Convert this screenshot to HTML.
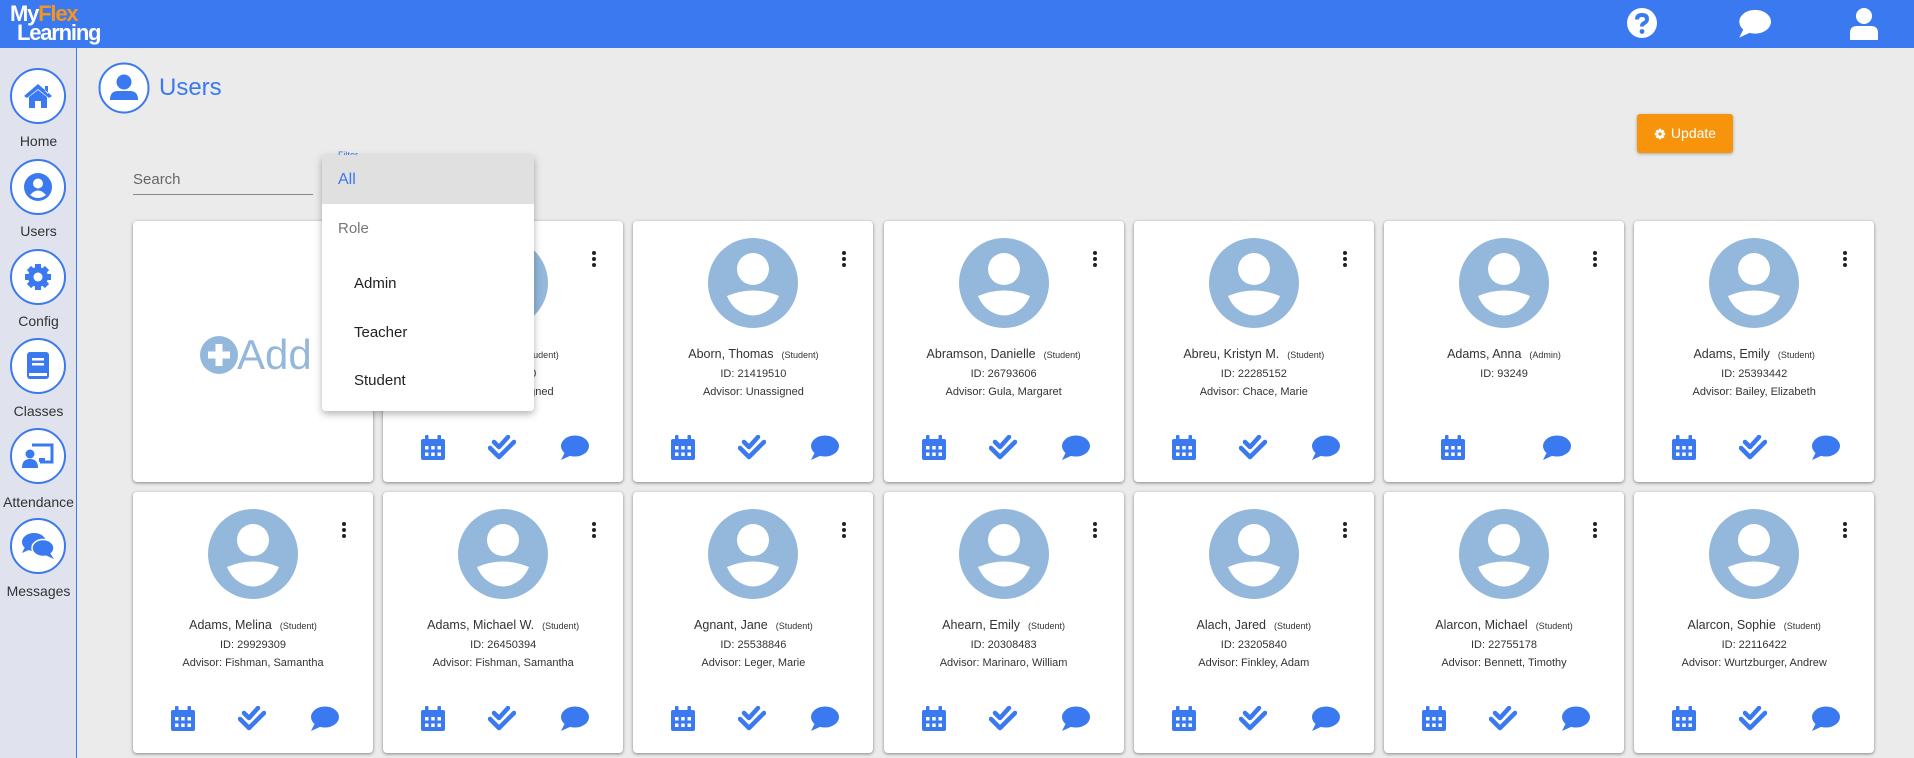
<!DOCTYPE html>
<html><head><meta charset="utf-8"><style>
*{box-sizing:border-box;margin:0;padding:0}
body{width:1914px;height:758px;overflow:hidden;background:#ebebeb;font-family:"Liberation Sans",sans-serif;position:relative;color:#333}
.hdr{position:absolute;left:0;top:0;width:1914px;height:48px;background:#3a79f0}
.side{position:absolute;left:0;top:48px;width:77px;height:710px;background:#e0e2ee;border-right:1.5px solid #3a79f0}
.nav{position:absolute;left:10px;width:56px;height:56px;border-radius:50%;background:#fff;border:2.5px solid #3a79f0;display:flex;align-items:center;justify-content:center}
.nl{position:absolute;left:0;width:77px;text-align:center;font-size:14px;color:#333}
.card{position:absolute;width:240px;height:261px;background:#fff;border-radius:4px;box-shadow:0 1px 3px rgba(0,0,0,.45)}
.av{position:absolute;left:75px;top:17px}
.dots{position:absolute;left:209px;top:30px;width:4px}
.dots i{display:block;width:4px;height:4px;border-radius:50%;background:#222;margin-bottom:2px}
.nm{position:absolute;left:0;width:240px;top:126px;text-align:center;font-size:12.5px;color:#333}
.nm small{font-size:9px;margin-left:8px}
.ln{position:absolute;left:0;width:240px;text-align:center;font-size:11px;color:#333}
.ic{position:absolute;top:214px}
</style></head><body>
<svg width="0" height="0" style="position:absolute">
<defs>
<symbol id="av" viewBox="-45 -45 90 90"><circle r="45" fill="#94b8db"/><circle cy="-14" r="16" fill="#fff"/><path d="M-26 13 Q0 2 26 13 A36 36 0 0 1 18 25 Q0 40 -18 25 A36 36 0 0 1 -26 13Z" fill="#fff"/></symbol>
<symbol id="cal" viewBox="0 0 26 26"><rect x="1" y="4" width="24" height="21" rx="2" fill="#3a79f0"/><rect x="5" y="0" width="3.5" height="6" rx="1" fill="#3a79f0"/><rect x="17.5" y="0" width="3.5" height="6" rx="1" fill="#3a79f0"/><g fill="#fff"><rect x="5" y="11" width="3.5" height="3.5"/><rect x="11.2" y="11" width="3.5" height="3.5"/><rect x="17.5" y="11" width="3.5" height="3.5"/><rect x="5" y="17.5" width="3.5" height="3.5"/><rect x="11.2" y="17.5" width="3.5" height="3.5"/><rect x="17.5" y="17.5" width="3.5" height="3.5"/></g></symbol>
<symbol id="chk" viewBox="0 0 28 28"><path d="M2 13 L11 22 L26 7 M6 7 L11 12 L20 2" stroke="#3a79f0" stroke-width="4.5" fill="none" stroke-linecap="round" stroke-linejoin="round"/></symbol>
<symbol id="cht" viewBox="0 0 30 26"><ellipse cx="16" cy="11" rx="14" ry="10.5" fill="#3a79f0"/><path d="M6 17 L2 25 L13 20Z" fill="#3a79f0"/></symbol>
</defs></svg>

<div class="hdr">
 <div style="position:absolute;left:10px;top:4px;font-weight:bold;font-size:22px;line-height:19px;color:#fff;letter-spacing:-1.2px">My<span style="color:#f7941d">Flex</span><br><span style="margin-left:7px">Learning</span></div>
 <svg style="position:absolute;left:1626px;top:7px" width="32" height="32" viewBox="0 0 32 32"><circle cx="16" cy="16" r="15" fill="#fff"/><path d="M11 12.5 Q11 8 16 8 Q21 8 21 12 Q21 15 17.5 16.5 Q16 17.3 16 19.5" stroke="#3a79f0" stroke-width="4" fill="none"/><circle cx="16" cy="24.5" r="2.4" fill="#3a79f0"/></svg>
 <svg style="position:absolute;left:1737px;top:9px" width="34" height="30" viewBox="0 0 30 26"><ellipse cx="16" cy="11" rx="14" ry="10.5" fill="#fff"/><path d="M6 17 L2 25 L13 20Z" fill="#fff"/></svg>
 <svg style="position:absolute;left:1849px;top:7px" width="30" height="34" viewBox="0 0 30 34"><circle cx="15" cy="9" r="8" fill="#fff"/><path d="M1 33 L1 26 Q1 19 8 19 L22 19 Q29 19 29 26 L29 33Z" fill="#fff"/></svg>
</div>

<div class="side">
 <div class="nav" style="top:20px"><svg width="30" height="28" viewBox="0 0 30 28"><path d="M15 2 L1 14 L4 16 L15 7 L26 16 L29 14Z M22 4 h3 v8 l-3 -3z" fill="#3a79f0"/><path d="M6 15 L15 8 L24 15 V26 H18 V19 H12 V26 H6Z" fill="#3a79f0"/></svg></div>
 <div class="nl" style="top:85px">Home</div>
 <div class="nav" style="top:111px"><svg width="30" height="30" viewBox="0 0 30 30"><circle cx="15" cy="15" r="14" fill="#3a79f0"/><circle cx="15" cy="11.5" r="5" fill="#fff"/><path d="M7 23 Q15 14 23 23 Q15 29 7 23Z" fill="#fff"/></svg></div>
 <div class="nl" style="top:175px">Users</div>
 <div class="nav" style="top:201px"><svg width="30" height="30" viewBox="0 0 30 30"><g fill="#3a79f0"><circle cx="15" cy="15" r="10"/><g stroke="#3a79f0" stroke-width="6"><path d="M15 2 V28 M2 15 H28 M6 6 L24 24 M24 6 L6 24"/></g></g><circle cx="15" cy="15" r="4.5" fill="#fff"/></svg></div>
 <div class="nl" style="top:265px">Config</div>
 <div class="nav" style="top:290px"><svg width="26" height="30" viewBox="0 0 26 30"><rect x="2" y="1" width="22" height="27" rx="3" fill="#3a79f0"/><rect x="7" y="7" width="12" height="2.5" fill="#fff"/><rect x="7" y="12" width="12" height="2.5" fill="#fff"/><rect x="4" y="22" width="18" height="3" fill="#fff"/></svg></div>
 <div class="nl" style="top:355px">Classes</div>
 <div class="nav" style="top:380px"><svg width="32" height="28" viewBox="0 0 32 28"><path d="M10 3 H30 V20 H18" stroke="#3a79f0" stroke-width="3" fill="none"/><rect x="17" y="16" width="6" height="4" fill="#3a79f0"/><circle cx="8" cy="12" r="4.5" fill="#3a79f0"/><path d="M0 26 Q0 17 8 17 Q16 17 16 26Z" fill="#3a79f0"/></svg></div>
 <div class="nl" style="top:446px">Attendance</div>
 <div class="nav" style="top:470px"><svg width="34" height="30" viewBox="0 0 34 30"><ellipse cx="13" cy="11" rx="12" ry="9" fill="#3a79f0"/><path d="M4 16 L1 22 L10 18Z" fill="#3a79f0"/><ellipse cx="22" cy="17" rx="11" ry="8.5" fill="#3a79f0" stroke="#fff" stroke-width="1.5"/><path d="M29 22 L33 28 L24 24Z" fill="#3a79f0"/></svg></div>
 <div class="nl" style="top:535px">Messages</div>
</div>

<svg style="position:absolute;left:98px;top:62px" width="52" height="52" viewBox="0 0 52 52"><circle cx="26" cy="26" r="24.5" fill="#fff" stroke="#3a79f0" stroke-width="2"/><circle cx="26" cy="20" r="7.5" fill="#3a79f0"/><path d="M12 38 Q12 29 20 29 H32 Q40 29 40 38 Z" fill="#3a79f0"/></svg>
<div style="position:absolute;left:159px;top:74px;font-size:24px;color:#3a79f0">Users</div>

<div style="position:absolute;left:1637px;top:114px;width:96px;height:39px;background:#f7940b;border-radius:3px;box-shadow:0 1px 3px rgba(0,0,0,.3);color:#fff;font-size:14px;line-height:39px;display:flex;align-items:center;justify-content:center;gap:5px"><svg width="12" height="12" viewBox="0 0 30 30"><g stroke="#fff" stroke-width="6"><path d="M15 2 V28 M2 15 H28 M6 6 L24 24 M24 6 L6 24"/></g><circle cx="15" cy="15" r="10" fill="#fff"/><circle cx="15" cy="15" r="4" fill="#f7940b"/></svg>Update</div>

<div style="position:absolute;left:133px;top:171px;font-size:15px;color:#666">Search</div>
<div style="position:absolute;left:133px;top:194px;width:180px;height:1px;background:#888"></div>

<div id="cards"></div>

<div style="position:absolute;left:338px;top:150px;font-size:9px;color:#3a79f0">Filter</div>
<div style="position:absolute;left:322px;top:155px;width:212px;height:256px;background:#fff;border-radius:4px;box-shadow:0 3px 8px rgba(0,0,0,.3);overflow:hidden">
 <div style="height:49px;background:#e0e0e0;font-size:16px;color:#3a79f0;padding:16px 0 0 16px">All</div>
 <div style="position:absolute;left:16px;top:65px;font-size:15px;color:#777">Role</div>
 <div style="position:absolute;left:32px;top:120px;font-size:15px;color:#222">Admin</div>
 <div style="position:absolute;left:32px;top:169px;font-size:15px;color:#222">Teacher</div>
 <div style="position:absolute;left:32px;top:217px;font-size:15px;color:#222">Student</div>
</div>

<script>
var d=[null,["Abell, Kayla","Student","21765120","Unassigned"],["Aborn, Thomas","Student","21419510","Unassigned"],["Abramson, Danielle","Student","26793606","Gula, Margaret"],["Abreu, Kristyn M.","Student","22285152","Chace, Marie"],["Adams, Anna","Admin","93249",null],["Adams, Emily","Student","25393442","Bailey, Elizabeth"],
["Adams, Melina","Student","29929309","Fishman, Samantha"],["Adams, Michael W.","Student","26450394","Fishman, Samantha"],["Agnant, Jane","Student","25538846","Leger, Marie"],["Ahearn, Emily","Student","20308483","Marinaro, William"],["Alach, Jared","Student","23205840","Finkley, Adam"],["Alarcon, Michael","Student","22755178","Bennett, Timothy"],["Alarcon, Sophie","Student","22116422","Wurtzburger, Andrew"]];
var h="";
for(var i=0;i<14;i++){var x=133+(i%7)*250.2,y=i<7?221:492,c=d[i];
h+='<div class="card" style="left:'+x+'px;top:'+y+'px">';
if(!c){h+='<div style="position:absolute;left:66px;top:110px;display:flex;align-items:center"><svg width="40" height="40" viewBox="0 0 40 40"><circle cx="20" cy="20" r="19" fill="#94b8db"/><path d="M20 9V31M9 20H31" stroke="#fff" stroke-width="7"/></svg><span style="font-size:42px;color:#94b8db;margin-left:-2px">Add</span></div>';}
else{h+='<svg class="av" width="90" height="90"><use href="#av"/></svg><div class="dots"><i></i><i></i><i></i></div>';
h+='<div class="nm">'+c[0]+'<small>('+c[1]+')</small></div><div class="ln" style="top:147px">ID: '+c[2]+'</div>';
if(c[3])h+='<div class="ln" style="top:165px">Advisor: '+c[3]+'</div>';
if(c[3]){h+='<svg class="ic" style="left:37px" width="26" height="26"><use href="#cal"/></svg><svg class="ic" style="left:105px" width="28" height="28"><use href="#chk"/></svg><svg class="ic" style="left:176px" width="30" height="26"><use href="#cht"/></svg>';}
else{h+='<svg class="ic" style="left:56px" width="26" height="26"><use href="#cal"/></svg><svg class="ic" style="left:157px" width="30" height="26"><use href="#cht"/></svg>';}}
h+='</div>';}
document.getElementById("cards").innerHTML=h;
</script>
</body></html>
